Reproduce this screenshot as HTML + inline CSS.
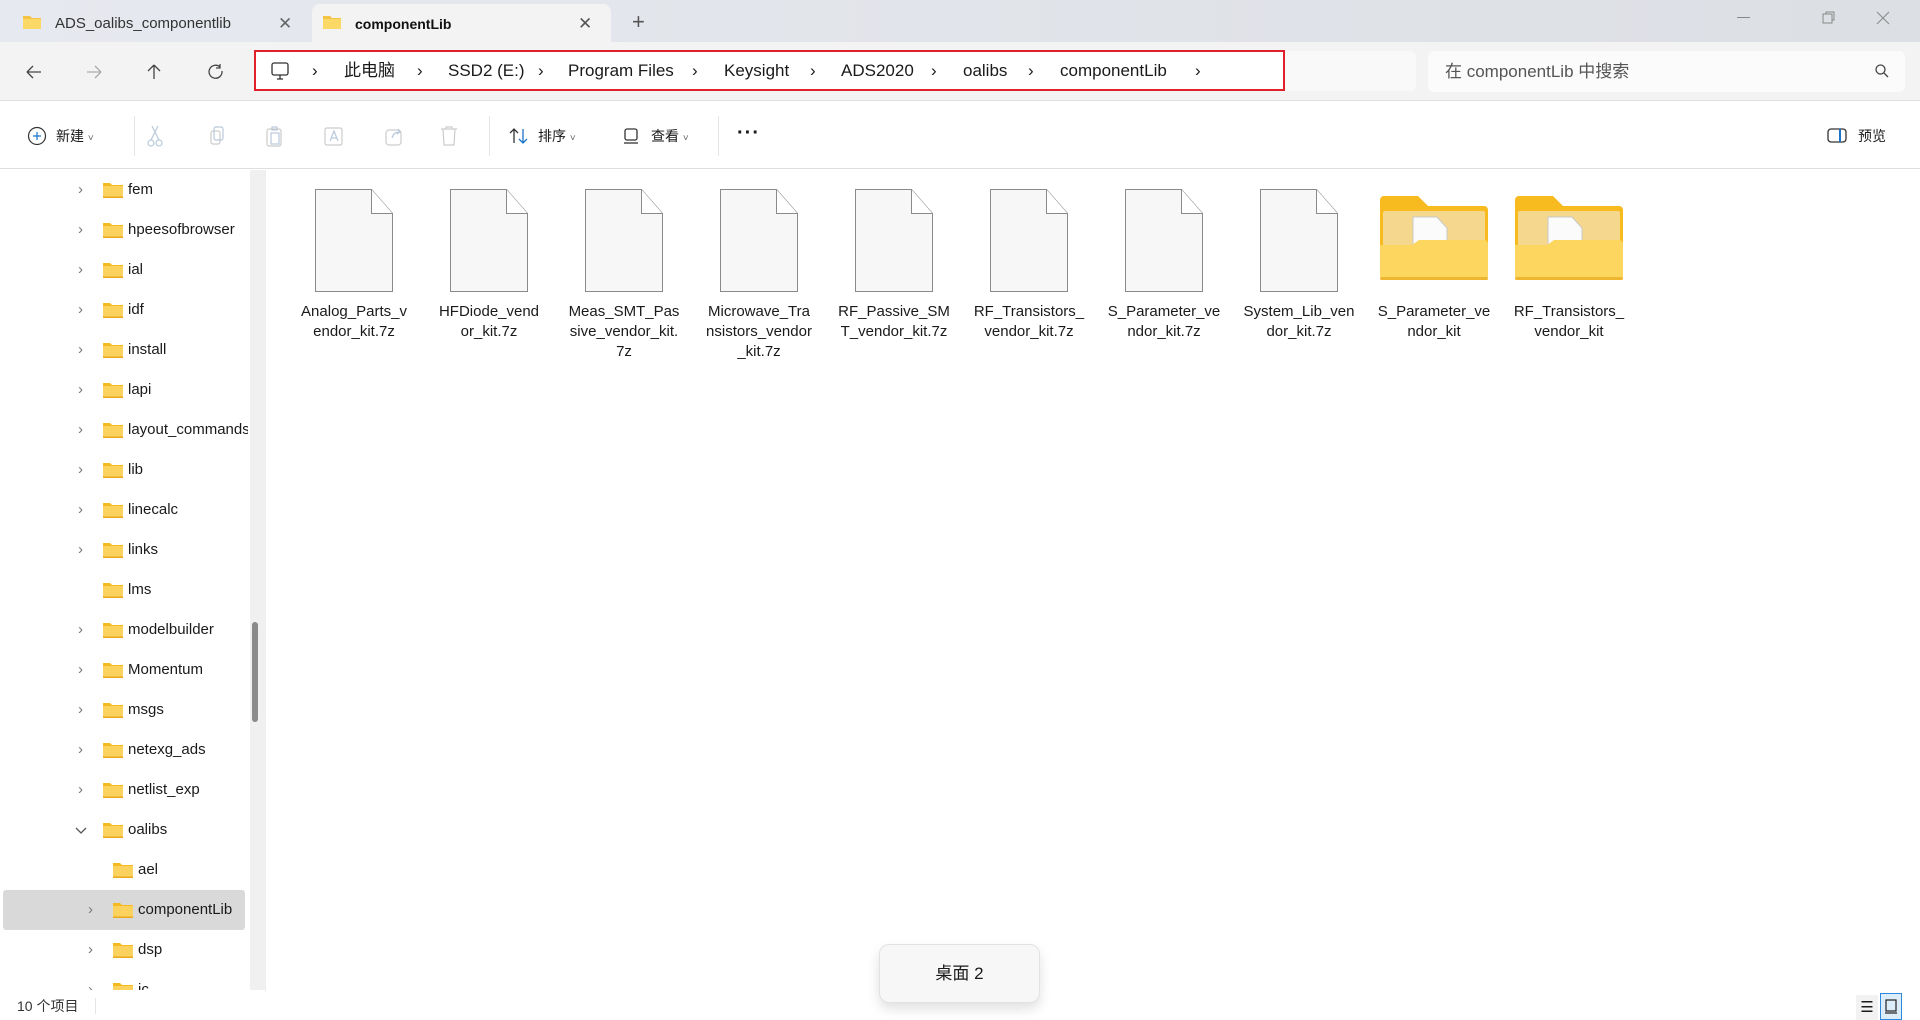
<!DOCTYPE html>
<html><head><meta charset="utf-8"><style>
*{box-sizing:border-box;margin:0;padding:0}
body{width:1920px;height:1020px;overflow:hidden;background:#fff;font-family:"Liberation Sans","Noto Sans CJK SC",sans-serif;color:#1a1a1a;position:relative}
.abs{position:absolute}
.tabbar{left:0;top:0;width:1920px;height:42px;background:linear-gradient(90deg,#e6e9ef,#dcdfe4)}
.tab{top:6px;height:36px;font-size:15px;line-height:36px}
.addr{left:0;top:42px;width:1920px;height:59px;background:#f3f3f3;border-bottom:1px solid #e0e0e0}
.tool{left:0;top:101px;width:1920px;height:68px;background:#fff;border-bottom:1px solid #dedede}
.crumb{top:59px;font-size:17px;line-height:24px;color:#1a1a1a}
.tb{font-size:14px;line-height:20px;top:126px}
.tree{font-size:15px;line-height:20px}
.fn{position:absolute;width:130px;text-align:center;font-size:15px;line-height:20px;top:302px;white-space:nowrap}
</style></head><body>
<div class="abs tabbar"></div>
<svg class="abs" style="left:22px;top:14px" width="20" height="16"><path d="M1 2h7l2 2h9v11H1z" fill="#f6c445"/><rect x="1" y="5" width="18" height="10" fill="#fcd867"/></svg>
<div class="abs tab" style="left:55px;color:#333">ADS_oalibs_componentlib</div>
<div class="abs tab" style="left:278px;font-size:17px;color:#666">✕</div>
<div class="abs" style="left:312px;top:4px;width:299px;height:38px;background:#f3f3f3;border-radius:8px 8px 0 0"></div>
<svg class="abs" style="left:322px;top:14px" width="20" height="16"><path d="M1 2h7l2 2h9v11H1z" fill="#f6c445"/><rect x="1" y="5" width="18" height="10" fill="#fcd867"/></svg>
<div class="abs tab" style="left:355px;color:#111;font-weight:bold;font-size:14px">componentLib</div>
<div class="abs tab" style="left:578px;font-size:17px;color:#555">✕</div>
<div class="abs tab" style="left:632px;font-size:22px;color:#555;top:4px">+</div>
<div class="abs" style="left:1737px;top:17px;width:13px;height:1px;background:#888"></div>
<svg class="abs" style="left:1822px;top:11px" width="14" height="14"><rect x="1" y="3" width="9" height="9" fill="none" stroke="#888"/><path d="M4 3V1h8v8h-2" fill="none" stroke="#888"/></svg>
<svg class="abs" style="left:1876px;top:11px" width="14" height="14"><path d="M1 1l12 12M13 1L1 13" stroke="#888"/></svg>

<div class="abs addr"></div>
<svg class="abs" style="left:24px;top:62px" width="240" height="20" fill="none" stroke="#444" stroke-width="1.3">
<path d="M3 10h14M3 10l6-6M3 10l6 6"/>
<path d="M63 10h14M77 10l-6-6M77 10l-6 6" stroke="#aaa"/>
<path d="M130 3v14M130 3l-6 6M130 3l6 6"/>
<path d="M196 5a6.5 6.5 0 1 0 2 4M196 2v4h-4"/>
</svg>
<div class="abs" style="left:254px;top:50px;width:1031px;height:41px;border:2px solid #e0202a;background:#fff"></div>
<svg class="abs" style="left:270px;top:61px" width="20" height="20" fill="none" stroke="#333" stroke-width="1.3"><rect x="2" y="2" width="16" height="12" rx="2"/><path d="M7 18h6M10 14v4"/></svg>
<div class="abs crumb" style="left:312px">›</div><div class="abs crumb" style="left:344px">此电脑</div>
<div class="abs crumb" style="left:417px">›</div><div class="abs crumb" style="left:448px">SSD2 (E:)</div>
<div class="abs crumb" style="left:538px">›</div><div class="abs crumb" style="left:568px">Program Files</div>
<div class="abs crumb" style="left:692px">›</div><div class="abs crumb" style="left:724px">Keysight</div>
<div class="abs crumb" style="left:810px">›</div><div class="abs crumb" style="left:841px">ADS2020</div>
<div class="abs crumb" style="left:931px">›</div><div class="abs crumb" style="left:963px">oalibs</div>
<div class="abs crumb" style="left:1028px">›</div><div class="abs crumb" style="left:1060px">componentLib</div>
<div class="abs crumb" style="left:1195px">›</div>
<div class="abs" style="left:1285px;top:51px;width:131px;height:40px;background:#f9f9f9;border-radius:0 6px 6px 0"></div>
<div class="abs" style="left:1428px;top:51px;width:477px;height:41px;background:#fbfbfb;border-radius:6px"></div>
<div class="abs" style="left:1445px;top:60px;font-size:17px;line-height:24px;color:#555">在 componentLib 中搜索</div>
<svg class="abs" style="left:1874px;top:63px" width="16" height="16" fill="none" stroke="#444" stroke-width="1.3"><circle cx="6.5" cy="6.5" r="4.5"/><path d="M10 10l4 4"/></svg>

<div class="abs tool"></div>
<svg class="abs" style="left:27px;top:126px" width="20" height="20" fill="none" stroke="#333" stroke-width="1.2"><circle cx="10" cy="10" r="8.5"/><path d="M10 6v8M6 10h8" stroke="#1a73c8"/></svg>
<div class="abs tb" style="left:56px">新建 <span style="font-size:10px;color:#666">˅</span></div>
<div class="abs" style="left:134px;top:116px;width:1px;height:40px;background:#e5e5e5"></div>
<svg class="abs" style="left:145px;top:124px" width="340" height="24" fill="none" stroke="#b9c9dc" stroke-width="1.2">
<circle cx="6" cy="19" r="3"/><circle cx="14" cy="19" r="3"/><path d="M6 16L13 2M14 16L7 2"/>
<rect x="66" y="7" width="9" height="13" rx="2" stroke="#ccc"/><rect x="69" y="3" width="9" height="13" rx="2"/>
<rect x="122" y="5" width="14" height="17" rx="2" stroke="#ccc"/><rect x="127" y="3" width="5" height="3"/><rect x="126" y="9" width="8" height="11"/>
<rect x="180" y="4" width="17" height="17" rx="2" stroke="#ccc"/><path d="M185 17l4-10 4 10M186.5 14h5"/>
<rect x="241" y="6" width="15" height="15" rx="3" stroke="#ccc"/><path d="M247 14c1-4 4-6 8-6l-2-3M255 8l-3 2"/>
<path d="M296 5h16M301 5V3h6v2M298 5l1 16h10l1-16" stroke="#ccc"/>
</svg>
<div class="abs" style="left:489px;top:116px;width:1px;height:40px;background:#e5e5e5"></div>
<svg class="abs" style="left:509px;top:127px" width="20" height="18" fill="none" stroke-width="1.3"><path d="M5 16V2M1 6l4-4 4 4" stroke="#333"/><path d="M14 2v14M10 12l4 4 4-4" stroke="#1a73c8"/></svg>
<div class="abs tb" style="left:538px">排序 <span style="font-size:10px;color:#666">˅</span></div>
<svg class="abs" style="left:622px;top:127px" width="18" height="18" fill="none" stroke="#333" stroke-width="1.3"><rect x="3" y="2" width="12" height="11" rx="2"/><path d="M2 16h14"/></svg>
<div class="abs tb" style="left:651px">查看 <span style="font-size:10px;color:#666">˅</span></div>
<div class="abs" style="left:718px;top:116px;width:1px;height:40px;background:#e5e5e5"></div>
<div class="abs" style="left:737px;top:122px;font-size:20px;letter-spacing:1px;font-weight:bold">···</div>
<svg class="abs" style="left:1827px;top:127px" width="20" height="17" fill="none" stroke-width="1.3"><rect x="1" y="2" width="18" height="13" rx="3" stroke="#333"/><path d="M13 2v13" stroke="#1a73c8" stroke-width="2"/></svg>
<div class="abs tb" style="left:1858px">预览</div>

<div class="abs" style="left:250px;top:170px;width:15px;height:822px;background:#f0f0f0"></div>
<div class="abs" style="left:252px;top:622px;width:6px;height:100px;background:#8a8a8a;border-radius:3px"></div>
<div class="abs" style="left:3px;top:890px;width:242px;height:40px;background:#d9d9d9;border-radius:3px"></div>
<div id="tree"></div>
<script>
var items=[["fem",0,1],["hpeesofbrowser",0,1],["ial",0,1],["idf",0,1],["install",0,1],["lapi",0,1],["layout_commands",0,1],["lib",0,1],["linecalc",0,1],["links",0,1],["lms",0,0],["modelbuilder",0,1],["Momentum",0,1],["msgs",0,1],["netexg_ads",0,1],["netlist_exp",0,1],["oalibs",0,2],["ael",1,0],["componentLib",1,1],["dsp",1,1],["ic",1,1]];
var h="";
items.forEach(function(it,i){var y=190+40*i;var o=it[1]?10:0;
if(it[2]==1)h+='<div class="abs tree" style="left:'+(78+o)+'px;top:'+(y-10)+'px;color:#777">›</div>';
if(it[2]==2)h+='<svg class="abs" style="left:'+(75+o)+'px;top:'+(y-3)+'px" width="12" height="8"><path d="M1 1l5 5 5-5" fill="none" stroke="#555" stroke-width="1.3"/></svg>';
h+='<svg class="abs" style="left:'+(103+o)+'px;top:'+(y-7)+'px" width="20" height="15"><path d="M0 0h7l2 2h11v13H0z" fill="#f5b921"/><rect x="0" y="3" width="20" height="12" fill="#fcd25f"/><rect x="0" y="13.5" width="20" height="1.5" fill="#e9a91a"/></svg>';
h+='<div class="abs tree" style="left:'+(128+o)+'px;top:'+(y-10)+'px;width:'+(120-o)+'px;overflow:hidden;white-space:nowrap">'+it[0]+'</div>';});
document.getElementById('tree').innerHTML=h;
</script>
<div class="abs" style="left:0;top:990px;width:265px;height:30px;background:#fff"></div>
<div class="abs" style="left:265px;top:170px;width:1px;height:822px;background:#eee"></div>

<div id="files"></div>
<script>
var f=[["Analog_Parts_v","endor_kit.7z"],["HFDiode_vend","or_kit.7z"],["Meas_SMT_Pas","sive_vendor_kit.","7z"],["Microwave_Tra","nsistors_vendor","_kit.7z"],["RF_Passive_SM","T_vendor_kit.7z"],["RF_Transistors_","vendor_kit.7z"],["S_Parameter_ve","ndor_kit.7z"],["System_Lib_ven","dor_kit.7z"],["S_Parameter_ve","ndor_kit"],["RF_Transistors_","vendor_kit"]];
var g="";
f.forEach(function(n,i){var c=354+135*i;
if(i<8)g+='<svg class="abs" style="left:'+(c-40)+'px;top:188px" width="80" height="106"><path d="M1.5 1.5h56l21 24v78h-77z" fill="#f7f7f7" stroke="#8a8a8a"/><path d="M57.5 1.5v24h21" fill="#fff" stroke="#8a8a8a"/></svg>';
else g+='<svg class="abs" style="left:'+(c-54)+'px;top:196px" width="108" height="84"><path d="M0 4a4 4 0 0 1 4-4h34l10 10h56a4 4 0 0 1 4 4v66H0z" fill="#f7ba1f"/><rect x="3" y="15" width="102" height="55" rx="2" fill="#f5d78e"/><path d="M33 21h24l10 11v30H33z" fill="#fbfbfb" stroke="#c9c9c9"/><path d="M0 49h32l7-5h65a4 4 0 0 1 4 4v32a4 4 0 0 1-4 4H4a4 4 0 0 1-4-4z" fill="#fdd660"/><rect x="0" y="81" width="108" height="3" rx="1.5" fill="#eeb530"/></svg>';
g+='<div class="fn" style="left:'+(c-65)+'px">'+n.join('<br>')+'</div>';});
document.getElementById('files').innerHTML=g;
</script>

<div class="abs" style="left:0;top:992px;width:1920px;height:28px;background:#fff"></div>
<div class="abs" style="left:17px;top:996px;font-size:14px;line-height:20px;color:#333">10 个项目</div>
<div class="abs" style="left:95px;top:998px;width:1px;height:16px;background:#e5e5e5"></div>
<div class="abs" style="left:1856px;top:995px;width:22px;height:25px;background:#f2f2f2;font-size:15px;text-align:center;line-height:25px">☰</div>
<div class="abs" style="left:1880px;top:993px;width:22px;height:27px;background:#dcecf9;border:1px solid #2b8ae0"></div>
<svg class="abs" style="left:1884px;top:999px" width="14" height="16" fill="none" stroke="#222" stroke-width="1.2"><rect x="2" y="1" width="10" height="11"/><path d="M1 14h12"/></svg>

<div class="abs" style="left:879px;top:944px;width:161px;height:59px;background:#f7f7f7;border:1px solid #e2e2e2;border-radius:10px;box-shadow:0 6px 12px rgba(0,0,0,.12);text-align:center;line-height:57px;font-size:17px;z-index:5">桌面 2</div>
</body></html>
